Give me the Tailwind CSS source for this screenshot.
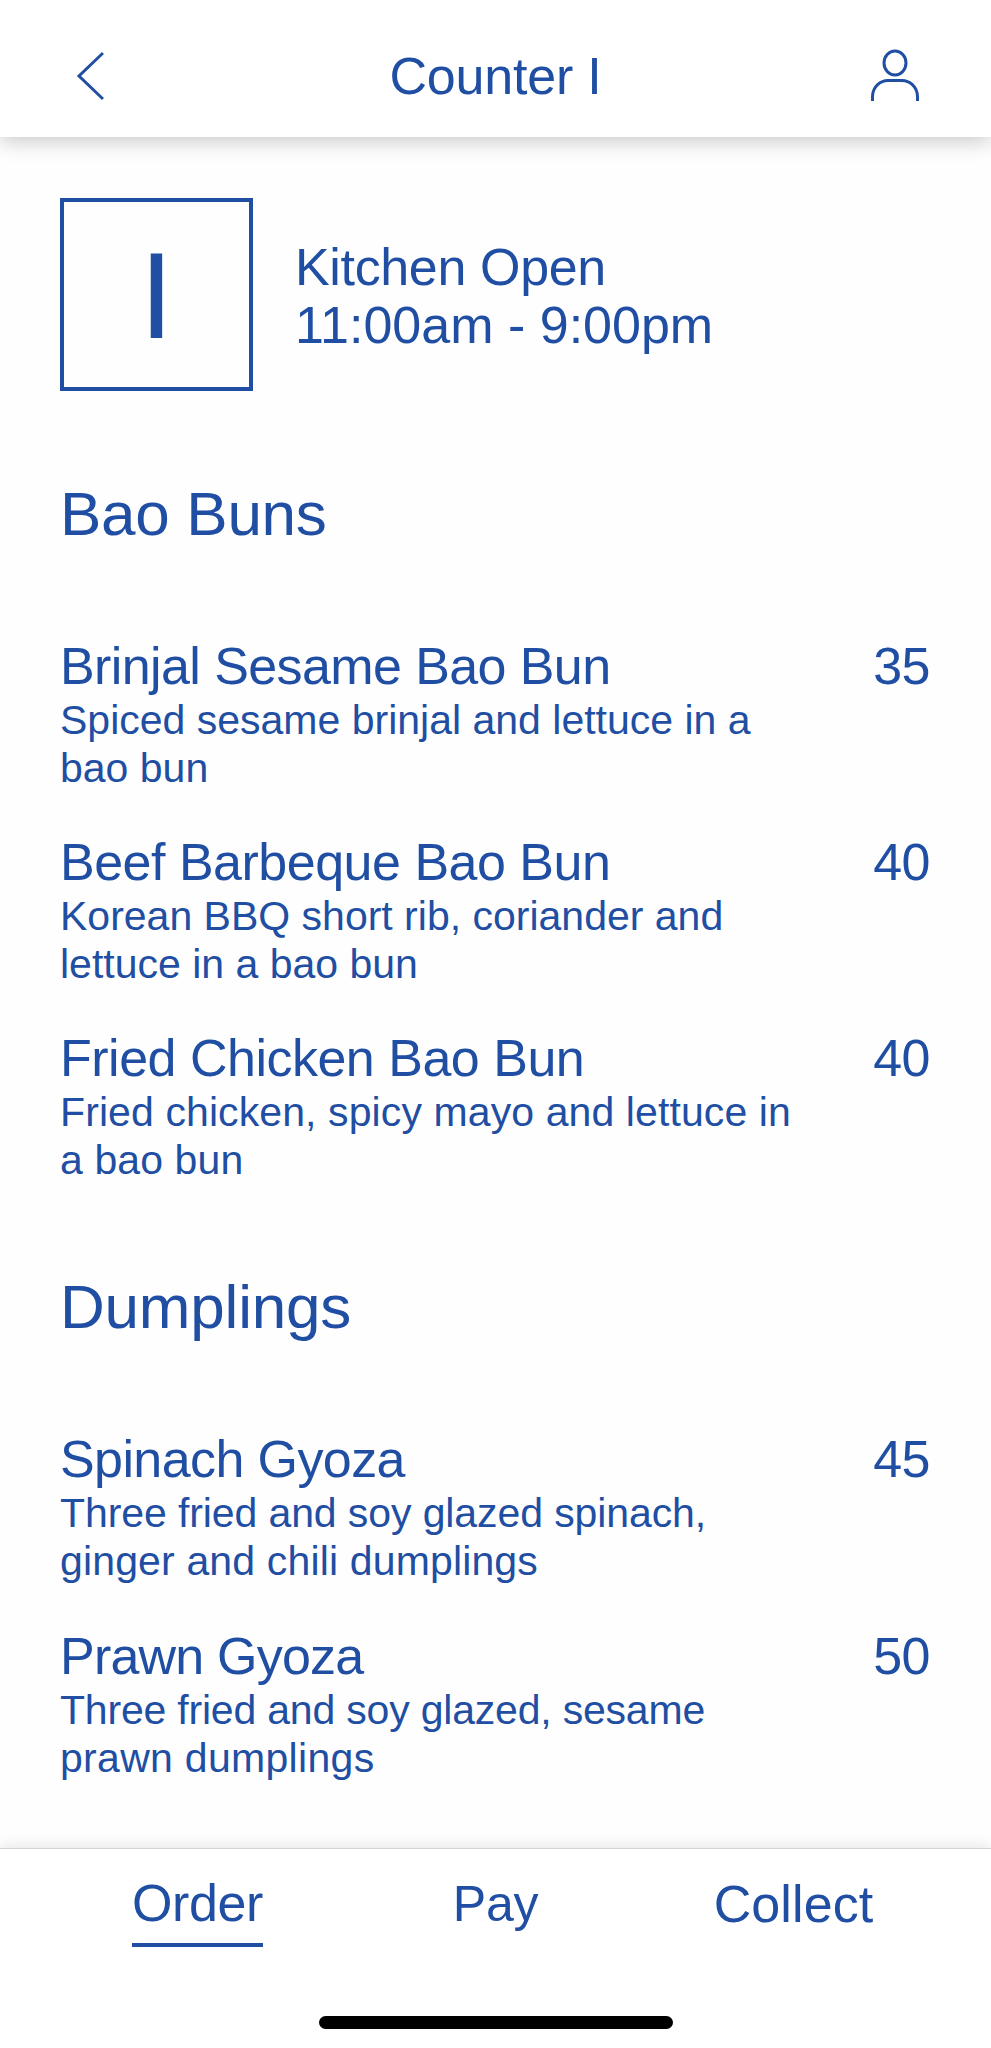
<!DOCTYPE html>
<html lang="en">

<head>
    <meta charset="UTF-8">
    <meta name="viewport" content="width=device-width, initial-scale=1.0">
    <title>Counter I</title>
    <script src="https://cdn.jsdelivr.net/npm/@tailwindcss/browser@4"></script>
</head>

<body class="bg-white">
    <div class="w-[991px] h-[2048px] flex flex-col overflow-hidden bg-[#fefefe] text-[#1f4ea3] font-['Liberation_Sans',Arial,sans-serif]">
        <!-- top bar -->
        <header class="relative z-10 h-[137px] shrink-0 px-[60px] pt-[15px] grid grid-cols-3 items-center bg-white shadow-[0_4px_20px_rgba(0,0,0,0.22)]">
            <svg class="ml-[16px] w-[28px] h-[50px]" viewBox="0 0 28 50" fill="none" stroke="#1f4ea3" stroke-width="3">
                <path d="M27 2 L3 25 L27 48" />
            </svg>
            <h1 class="text-center text-[52px] leading-[60px] tracking-[-0.2px]">Counter I</h1>
            <svg class="justify-self-end w-[50px] h-[54px] mr-[11px]" viewBox="0 0 50 54" fill="none" stroke="#1f4ea3" stroke-width="3">
                <ellipse cx="25" cy="14" rx="11" ry="12" />
                <path d="M2.500 52 V48 C2.500 37 11 31.500 18 31.500 H32 C39 31.500 47.500 37 47.500 48 V52" />
            </svg>
        </header>

        <main class="flex-1 px-[60px] pt-[61px]">
            <!-- counter info -->
            <div class="flex items-center gap-[42px]">
                <div class="w-[193px] h-[193px] pt-[3px] border-[4px] border-[#1f4ea3] flex items-center justify-center text-[122px] leading-none">I</div>
                <p class="pt-[3px] text-[52px] leading-[58px] tracking-[-0.35px]">Kitchen Open<br><span class="tracking-[0px]">11:00am - 9:00pm</span></p>
            </div>

            <h2 class="mt-[88px] text-[62px] leading-[70px] tracking-[-0.3px]">Bao Buns</h2>
            <div class="mt-[87px] flex flex-col gap-[40px]">
                <div class="flex justify-between">
                    <div class="w-[770px]">
                        <h3 class="text-[52px] leading-[60px] tracking-[-0.6px]">Brinjal Sesame Bao Bun</h3>
                        <p class="text-[41px] leading-[48px]">Spiced sesame brinjal and lettuce in a<br>bao bun</p>
                    </div>
                    <span class="mr-[1px] text-[52px] leading-[60px] tracking-[-0.5px]">35</span>
                </div>
                <div class="flex justify-between">
                    <div class="w-[770px]">
                        <h3 class="text-[52px] leading-[60px] tracking-[-0.5px]">Beef Barbeque Bao Bun</h3>
                        <p class="text-[41px] leading-[48px]">Korean BBQ short rib, coriander and<br>lettuce in a bao bun</p>
                    </div>
                    <span class="mr-[1px] text-[52px] leading-[60px] tracking-[-0.5px]">40</span>
                </div>
                <div class="flex justify-between">
                    <div class="w-[770px]">
                        <h3 class="text-[52px] leading-[60px] tracking-[-0.5px]">Fried Chicken Bao Bun</h3>
                        <p class="text-[41px] leading-[48px] tracking-[0.1px]">Fried chicken, spicy mayo and lettuce in<br>a bao bun</p>
                    </div>
                    <span class="mr-[1px] text-[52px] leading-[60px] tracking-[-0.5px]">40</span>
                </div>
            </div>

            <h2 class="mt-[88px] text-[62px] leading-[70px] tracking-[-0.2px]">Dumplings</h2>
            <div class="mt-[87px] flex flex-col gap-[41px]">
                <div class="flex justify-between">
                    <div class="w-[770px]">
                        <h3 class="text-[52px] leading-[60px] tracking-[-0.6px]">Spinach Gyoza</h3>
                        <p class="text-[41px] leading-[48px] tracking-[-0.1px]">Three fried and soy glazed spinach,<br><span class="tracking-[0.15px]">ginger and chili dumplings</span></p>
                    </div>
                    <span class="mr-[1px] text-[52px] leading-[60px] tracking-[-0.5px]">45</span>
                </div>
                <div class="flex justify-between">
                    <div class="w-[770px]">
                        <h3 class="text-[52px] leading-[60px] tracking-[-0.8px]">Prawn Gyoza</h3>
                        <p class="text-[41px] leading-[48px] tracking-[-0.2px]">Three fried and soy glazed, sesame<br><span class="tracking-[0.3px]">prawn dumplings</span></p>
                    </div>
                    <span class="mr-[1px] text-[52px] leading-[60px] tracking-[-0.5px]">50</span>
                </div>
            </div>
        </main>

        <!-- tabs -->
        <footer class="h-[200px] shrink-0 bg-white border-t border-[#d4d4d4] shadow-[0_-4px_12px_rgba(0,0,0,0.08)] relative">
            <nav class="px-[47px] pt-[24px] grid grid-cols-3 text-center text-[52px] leading-[60px]">
                <div><span class="inline-block ml-[2px] tracking-[-0.4px] h-[74px] border-b-[4px] border-[#1f4ea3]">Order</span></div>
                <div><span class="inline-block mt-[1px] text-[50px] tracking-[-0.3px]">Pay</span></div>
                <div><span class="inline-block mr-[2px] mt-[1px] tracking-[0.1px]">Collect</span></div>
            </nav>
            <div class="absolute left-[319px] top-[167px] w-[354px] h-[13px] rounded-full bg-black"></div>
        </footer>
    </div>
</body>

</html>
